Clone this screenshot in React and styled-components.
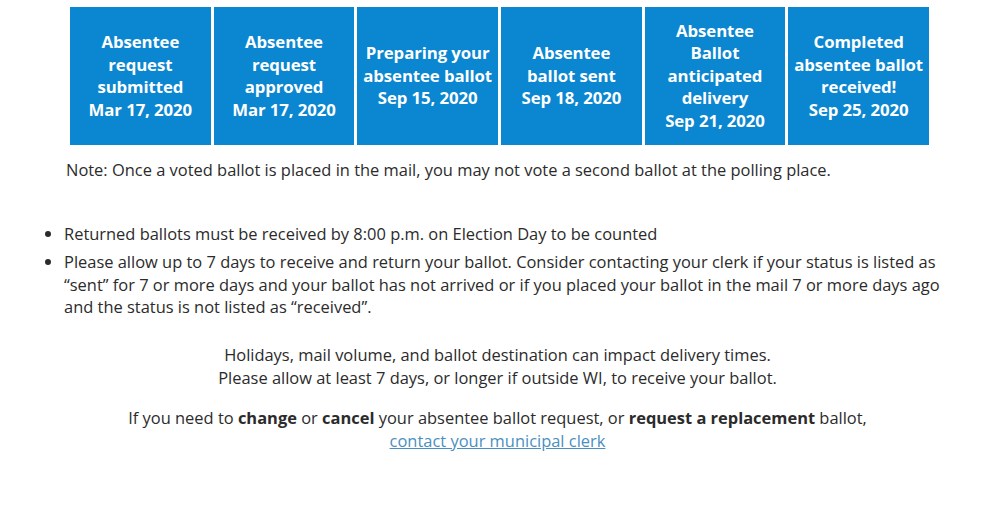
import React from "react";
import styled, { createGlobalStyle } from "styled-components";

const Global = createGlobalStyle`
  body { margin: 0; background: #fff; font-family: "Open Sans", "Liberation Sans", sans-serif; color: #2b2b2b; }
`;

const Page = styled.div`
  width: 947px;
  margin-left: 24px;
  padding-top: 7px;
  font-size: 16.45px;
  line-height: 22.6px;
`;

const Steps = styled.div`
  display: grid;
  grid-template-columns: repeat(6, 1fr);
  column-gap: 3px;
  width: 859px;
  margin-left: 46px;
`;

const Step = styled.div`
  background: #0b86d0;
  color: #fff;
  height: 138px;
  display: flex;
  align-items: center;
  justify-content: center;
  text-align: center;
  font-weight: 700;
  font-size: 16.8px;
  line-height: 22.5px;
  padding: 0 3px;
  letter-spacing: -0.1px;
`;

const Note = styled.p`
  margin: 14px 0 0 42px;
`;

const List = styled.ul`
  margin: 41px 0 0;
  padding-left: 40px;
`;

const Item = styled.li`
  margin-bottom: 6px;
`;

const Center = styled.p`
  text-align: center;
  margin: ${(p) => p.$top}px 0 0;
`;

const Link = styled.a`
  color: #4a8fbf;
  text-decoration: underline;
`;

const steps = [
  ["Absentee", "request", "submitted", "Mar 17, 2020"],
  ["Absentee", "request", "approved", "Mar 17, 2020"],
  ["Preparing your", "absentee ballot", "Sep 15, 2020"],
  ["Absentee", "ballot sent", "Sep 18, 2020"],
  ["Absentee", "Ballot", "anticipated", "delivery", "Sep 21, 2020"],
  ["Completed", "absentee ballot", "received!", "Sep 25, 2020"],
];

export default function App() {
  return (
    <Page>
      <Global />
      <Steps>
        {steps.map((lines, i) => (
          <Step key={i}>
            <div>
              {lines.map((l, j) => (
                <div key={j}>{l}</div>
              ))}
            </div>
          </Step>
        ))}
      </Steps>
      <Note>Note: Once a voted ballot is placed in the mail, you may not vote a second ballot at the polling place.</Note>
      <List>
        <Item>Returned ballots must be received by 8:00 p.m. on Election Day to be counted</Item>
        <Item>
          Please allow up to 7 days to receive and return your ballot. Consider contacting your clerk if your status is listed as “sent” for 7 or more days and your ballot has not arrived or if you placed your ballot in the mail 7 or more days ago and the status is not listed as “received”.
        </Item>
      </List>
      <Center $top={25}>
        Holidays, mail volume, and ballot destination can impact delivery times.
        <br />
        Please allow at least 7 days, or longer if outside WI, to receive your ballot.
      </Center>
      <Center $top={18}>
        If you need to <b>change</b> or <b>cancel</b> your absentee ballot request, or <b>request a replacement</b> ballot,
        <br />
        <Link href="#">contact your municipal clerk</Link>
      </Center>
    </Page>
  );
}
